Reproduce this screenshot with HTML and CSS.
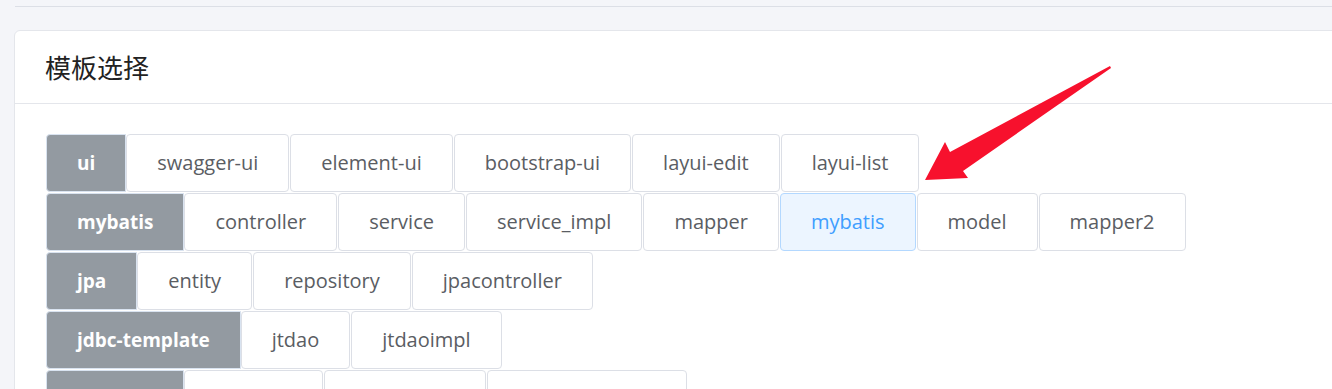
FILE: index.html
```html
<!DOCTYPE html>
<html lang="zh-CN">
<head>
	<meta charset="UTF-8">
	<title>模板选择</title>
	<link rel="stylesheet" href="styles.css">
</head>
<body>
	<div class="topbar"></div>
	<div class="card">
		<div class="card-header">模板选择</div>
		<div class="card-body">
			<div class="group">
				<span class="label">ui</span>
				<span class="btn">swagger-ui</span>
				<span class="btn">element-ui</span>
				<span class="btn">bootstrap-ui</span>
				<span class="btn">layui-edit</span>
				<span class="btn">layui-list</span>
			</div>
			<div class="group">
				<span class="label">mybatis</span>
				<span class="btn">controller</span>
				<span class="btn">service</span>
				<span class="btn">service_impl</span>
				<span class="btn">mapper</span>
				<span class="btn act">mybatis</span>
				<span class="btn">model</span>
				<span class="btn">mapper2</span>
			</div>
			<div class="group">
				<span class="label">jpa</span>
				<span class="btn">entity</span>
				<span class="btn">repository</span>
				<span class="btn">jpacontroller</span>
			</div>
			<div class="group">
				<span class="label">jdbc-template</span>
				<span class="btn">jtdao</span>
				<span class="btn">jtdaoimpl</span>
			</div>
			<div class="group">
				<span class="label">beetlsql</span>
				<span class="btn">beetlmd</span>
				<span class="btn">beetlentity</span>
				<span class="btn">beetlcontroller</span>
			</div>
		</div>
	</div>
	<!-- 标注箭头 -->
	<svg class="arrow" width="1332" height="389" viewBox="0 0 1332 389">
		<polygon points="1110,66 950,152 945,142 925,180 968,178 963,171 1111,68" fill="#f7112d"/>
	</svg>
</body>
</html>
```

FILE: styles.css
```css
html,body{
	margin: 0;
	padding: 0;
}
body{
	background: #f4f5f9;
	font-family: "Open Sans", "Noto Sans", "Noto Sans CJK SC", sans-serif;
	overflow: hidden;
	height: 389px;
	position: relative;
}
.topbar{
	height: 6px;
	margin-left: 15px;
	border-bottom: 1px solid #dcdfe6;
}
.card{
	margin: 23px 0 0 14px;
	width: 1340px;
	background: #fff;
	border: 1px solid #e4e6eb;
	border-radius: 6px;
}
.card-header{
	height: 72px;
	line-height: 72px;
	padding-left: 30px;
	font-size: 26px;
	color: #222;
	font-family: "Noto Sans CJK SC", sans-serif;
	border-bottom: 1px solid #e4e6eb;
}
.card-body{
	padding: 30px 31px;
	display: flex;
	flex-direction: column;
	gap: 1px;
}
.group{
	display: flex;
	gap: 1px;
}
.group span{
	height: 56px;
	line-height: 56px;
	padding: 0 30px;
	font-size: 20px;
	border: 1px solid #dcdfe6;
	border-radius: 4px;
	white-space: nowrap;
}
.group .label{
	background: #939aa1;
	color: #fff;
	font-size: 19px;
	font-weight: bold;
	border-color: #d9e3f0;
	border-radius: 4px 0 0 4px;
	margin-right: -1px;
}
.group .btn{
	background: #fff;
	color: #5a5d63;
}
.group .act{
	background: #ecf5ff;
	color: #409eff;
	border-color: #b3d8ff;
}
.arrow{
	position: absolute;
	top: 0;
	left: 0;
	pointer-events: none;
}
```
